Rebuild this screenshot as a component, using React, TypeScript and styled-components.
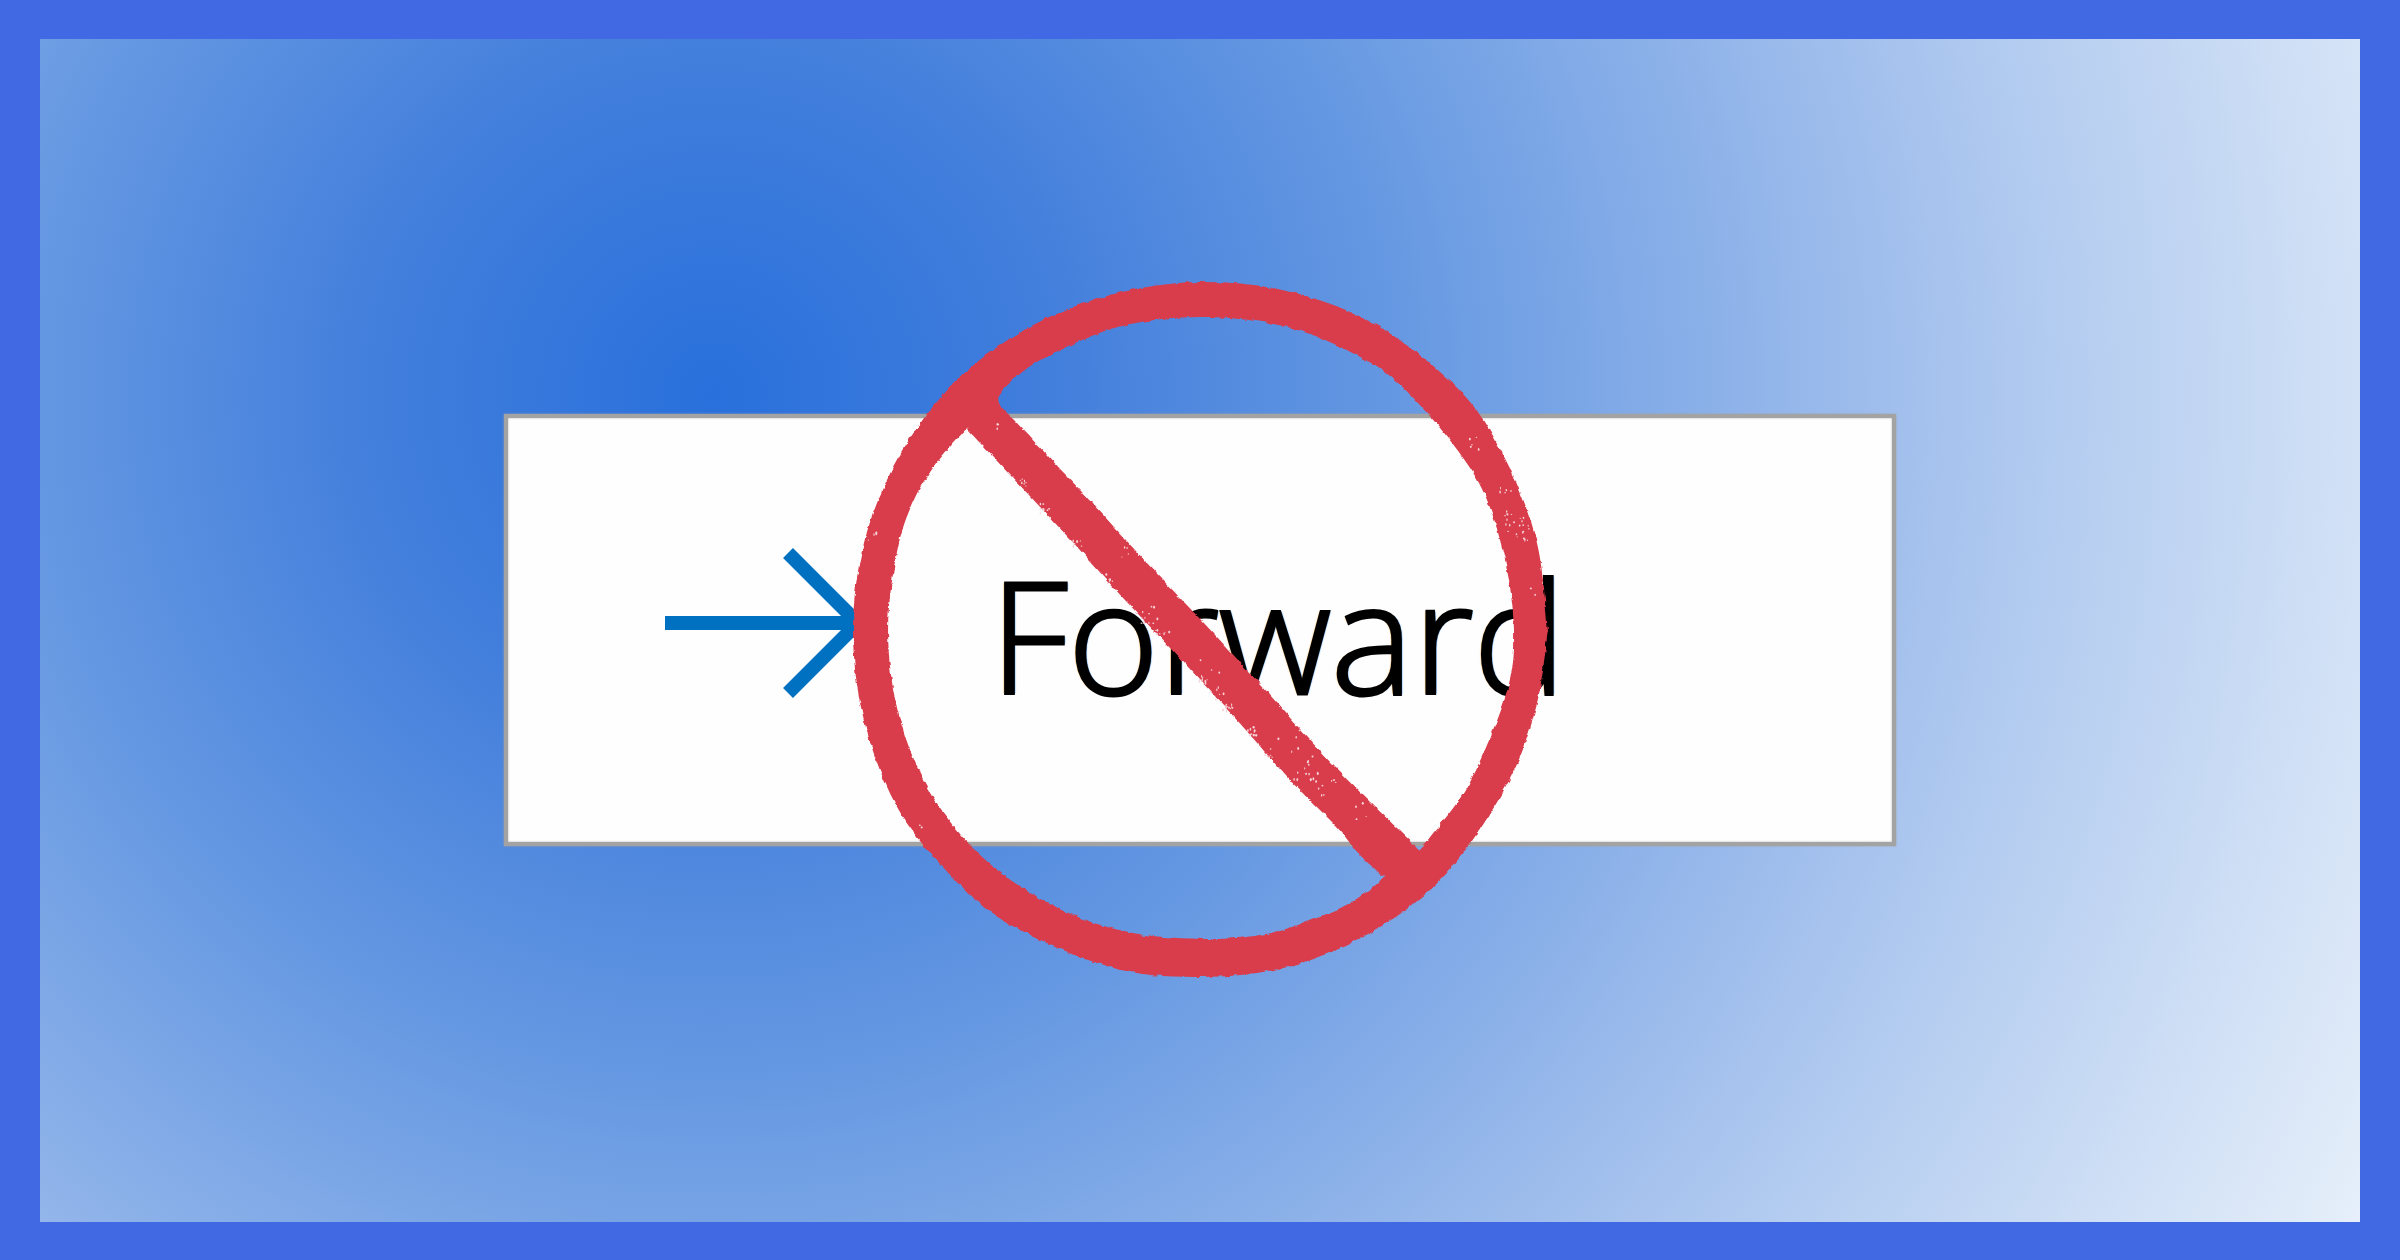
import React from "react";
import styled, { createGlobalStyle } from "styled-components";

const GlobalStyle = createGlobalStyle`
  * { box-sizing: border-box; }
  body { margin: 0; background: #4169e3; }
`;

const Frame = styled.main`
  display: flex;
  min-height: 100vh;
  padding: 39px 40px 38px;
  background: #4169e3;
`;

const Backdrop = styled.section`
  flex: 1;
  display: flex;
  align-items: center;
  justify-content: center;
  padding-bottom: 2px;
  background: radial-gradient(
    circle farthest-corner at 29% 30%,
    #2970dc 0%,
    #437fdc 19%,
    #6598e2 37%,
    #a3c0ed 65%,
    #b9d0f1 76%,
    #e6effa 100%
  );
`;

const Stage = styled.div`
  display: grid;
  place-items: center;
  width: 60%;
`;

const MenuItem = styled.button`
  grid-area: 1 / 1;
  display: flex;
  align-items: center;
  gap: 122px;
  width: 100%;
  min-height: 432px;
  padding: 0 0 14px 156px;
  border: 4px solid #a3a3a3;
  background: #fefefe;
  box-shadow: 0 0 2px #a3a3a3, inset 0 0 2px #a3a3a3;
  color: #000;
`;

const ArrowIcon = styled.svg`
  flex: none;
  width: 204px;
  height: 156px;
  fill: none;
  stroke: #0071c1;
  stroke-width: 14px;
`;

const Label = styled.span`
  padding-top: 22px;
  font-family: "Open Sans", "Noto Sans", sans-serif;
  font-size: 155px;
  font-weight: 300;
  line-height: 214px;
  -webkit-text-stroke: 3px #000;
  text-shadow: -2px 0 1px rgba(240, 150, 30, 0.6), 2px 0 1px rgba(20, 130, 240, 0.6);
`;

const Sign = styled.svg`
  grid-area: 1 / 1;
  z-index: 1;
  width: 50%;
  overflow: visible;
  pointer-events: none;
`;

type Point = [number, number];

const CENTRE: Point = [1201, 629];

// [angle in degrees clockwise from the right, radius]
const polar = (pairs: Point[]): Point[] =>
  pairs.map(([deg, r]) => {
    const a = (deg * Math.PI) / 180;
    return [CENTRE[0] + r * Math.cos(a), CENTRE[1] + r * Math.sin(a)];
  });

const OUTER = polar([
  [0, 347], [13, 344], [27, 343], [45, 346], [60, 347], [75, 348], [90, 347],
  [105, 349], [124, 351], [137, 350], [150, 351], [165, 348], [180, 347],
  [195, 347], [210, 347], [225, 348], [240, 347], [255, 346], [270, 347],
  [285, 349], [300, 351], [317, 352], [330, 349], [345, 347], [360, 347],
]);

const UPPER_ARC = polar([
  [229, 308], [232, 311], [240, 313], [255, 313], [270, 312], [285, 314],
  [298, 315], [310, 315], [330, 314], [345, 312], [360, 313], [372, 312],
  [390, 309], [402, 309], [405, 310],
]);

const UPPER_EDGE: Point[] = [
  [1420, 849], [1336, 767], [1260, 683], [1203, 621], [1147, 562], [1104, 515],
  [1067, 475], [1015, 420], [1001, 405], [999, 397],
];

const LOWER_EDGE: Point[] = [
  [968, 429], [1029, 494], [1081, 550], [1127, 601], [1189, 667], [1246, 729],
  [1288, 777], [1336, 825], [1359, 853], [1384, 876],
];

const LOWER_ARC = polar([
  [53, 307], [57, 310], [64, 311], [77, 311], [90, 309], [105, 311], [120, 313],
  [135, 315], [150, 315], [165, 313], [180, 312], [195, 313], [205, 314],
  [213, 311], [221, 308],
]);

// Catmull-Rom spline through the points, written as cubic segments.
function curve(points: Point[]): string {
  return points
    .slice(0, -1)
    .map((p1, i) => {
      const p0 = points[Math.max(i - 1, 0)];
      const p2 = points[i + 1];
      const p3 = points[Math.min(i + 2, points.length - 1)];
      const c1 = [p1[0] + (p2[0] - p0[0]) / 6, p1[1] + (p2[1] - p0[1]) / 6];
      const c2 = [p2[0] - (p3[0] - p1[0]) / 6, p2[1] - (p3[1] - p1[1]) / 6];
      return `C${c1.join(" ")} ${c2.join(" ")} ${p2.join(" ")}`;
    })
    .join("");
}

const SIGN_PATH =
  `M${OUTER[0].join(" ")}${curve(OUTER)}Z` +
  `M${UPPER_ARC[0].join(" ")}${curve(UPPER_ARC)}L${UPPER_EDGE[0].join(" ")}${curve(UPPER_EDGE)}Z` +
  `M${LOWER_EDGE[0].join(" ")}${curve(LOWER_EDGE)}L${LOWER_ARC[0].join(" ")}${curve(LOWER_ARC)}Z`;

type Group = [number, number, number, number];

// Dry-chalk flecks: centre x, centre y, spread, count.
const FLECKS: Group[] = [
  [1478, 443, 8, 5], [1507, 485, 8, 5], [1517, 520, 12, 18], [1524, 538, 8, 8],
  [1533, 590, 5, 2], [1003, 430, 7, 3], [1128, 550, 7, 4], [1150, 615, 9, 12],
  [1162, 632, 8, 7], [1210, 668, 10, 3], [1222, 692, 8, 5], [1300, 765, 14, 12],
  [1325, 785, 14, 10], [1290, 740, 12, 4], [1365, 812, 12, 4], [873, 537, 6, 4],
  [920, 824, 4, 2],
];

// Ragged flecks on the lower side of the bar.
const FRAY: Group[] = [
  [1022, 483, 5, 8], [1045, 508, 5, 8], [1078, 543, 5, 6], [1110, 578, 5, 6],
  [1203, 679, 5, 10], [1228, 706, 5, 12], [1252, 731, 5, 10], [1270, 752, 5, 6],
];

function scatter(groups: Group[]) {
  let seed = 17;
  const next = () => {
    seed = (seed * 16807) % 2147483647;
    return seed / 2147483647;
  };
  return groups.flatMap(([x, y, spread, count]) =>
    Array.from({ length: count }, () => ({
      x: x + (next() * 2 - 1) * spread,
      y: y + (next() * 2 - 1) * spread,
      rx: 0.5 + next() * 0.6,
      ry: 0.5 + next() * 1.1,
    }))
  );
}

const SPOTS = scatter([...FLECKS, ...FRAY]);

function Forward() {
  return (
    <MenuItem type="button">
      <ArrowIcon viewBox="0 0 204 156" aria-hidden="true">
        <path d="M1 78H192M124 8L194 78L124 148" />
      </ArrowIcon>
      <Label>Forward</Label>
    </MenuItem>
  );
}

function Prohibited() {
  return (
    <Sign viewBox="853 282 695 695" aria-hidden="true">
      <defs>
        <filter id="chalk" x="-2%" y="-2%" width="104%" height="104%" colorInterpolationFilters="sRGB">
          <feTurbulence type="fractalNoise" baseFrequency="0.12" numOctaves={4} seed={4} />
          <feDisplacementMap in="SourceGraphic" scale={4} xChannelSelector="R" yChannelSelector="G" />
        </filter>
      </defs>
      <path d={SIGN_PATH} fill="#d93d4c" fillRule="evenodd" filter="url(#chalk)" />
      <g fill="#f6d3d7">
        {SPOTS.map((s, i) => (
          <ellipse key={i} cx={s.x} cy={s.y} rx={s.rx} ry={s.ry} />
        ))}
      </g>
    </Sign>
  );
}

export default function App() {
  return (
    <>
      <GlobalStyle />
      <Frame>
        <Backdrop>
          <Stage>
            <Forward />
            <Prohibited />
          </Stage>
        </Backdrop>
      </Frame>
    </>
  );
}
